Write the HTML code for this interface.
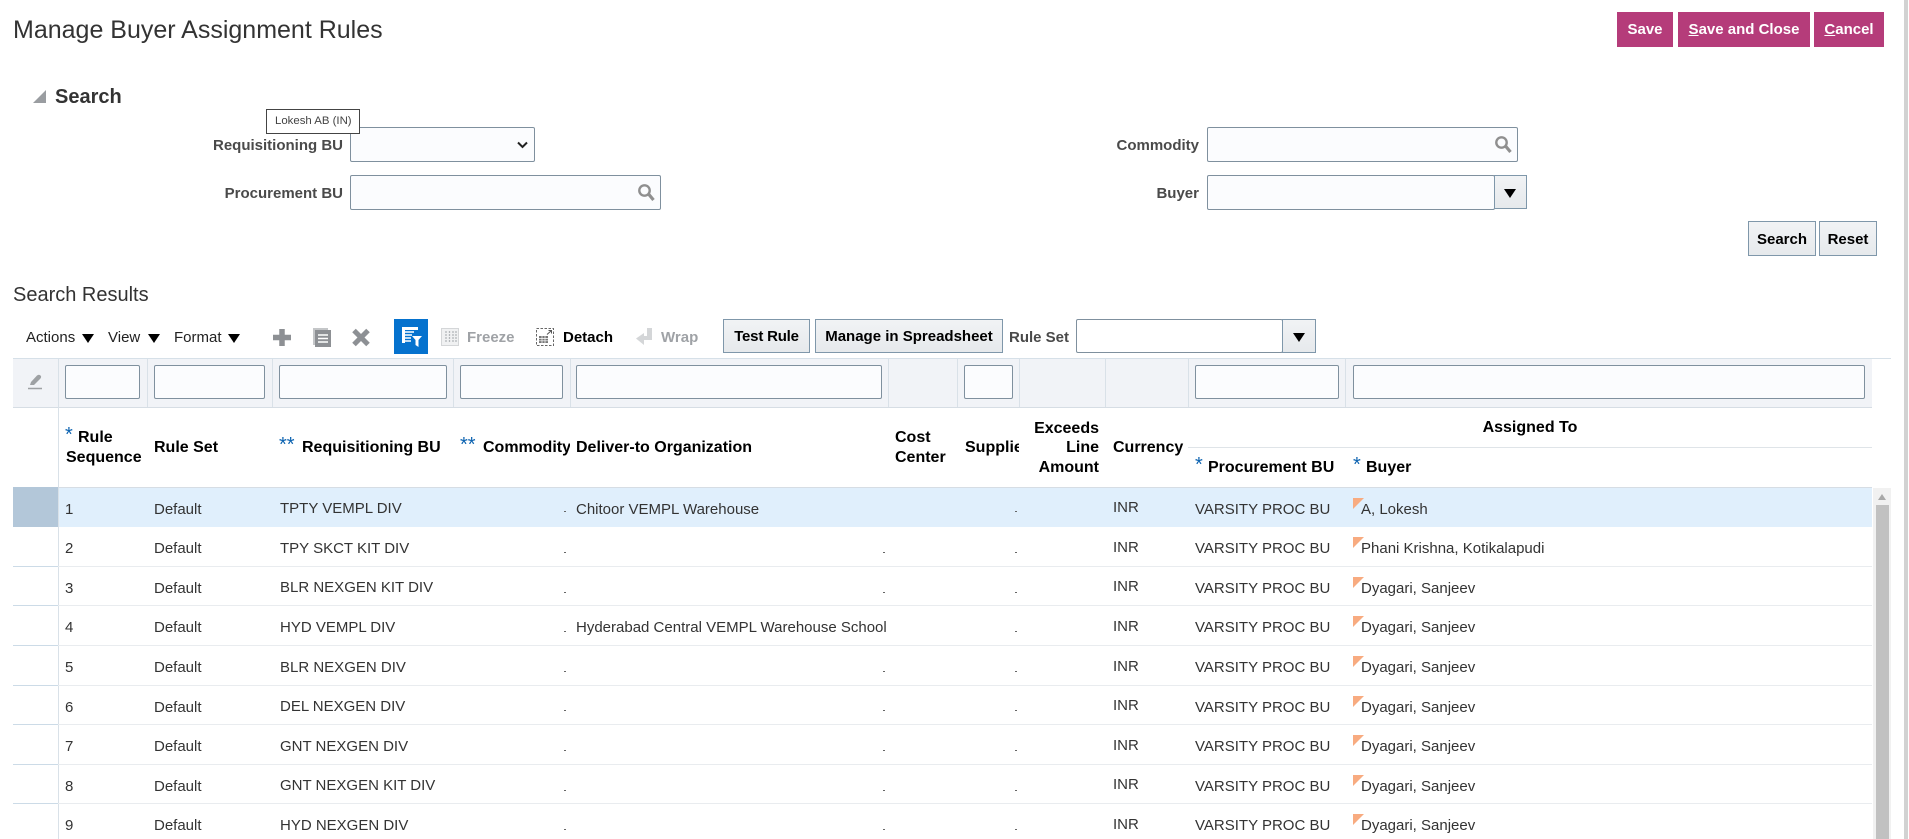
<!DOCTYPE html>
<html><head><meta charset="utf-8"><title>Manage Buyer Assignment Rules</title>
<style>
html,body{margin:0;padding:0;background:#fff;overflow:hidden}
body{position:relative;width:1909px;height:839px;font-family:"Liberation Sans",Arial,sans-serif;font-size:15px;color:#333}
.a,.t,.l,.h,.i,.b{position:absolute;box-sizing:border-box}
.t,.l,.h{white-space:nowrap;line-height:20px;height:20px;margin-top:1px}
.l{font-weight:bold;color:#4a4a4a;text-align:right}
.h{font-weight:bold;color:#000;font-size:16px}
.h u{color:#0b62b0;text-decoration:none;font-weight:normal;font-size:20px;position:relative;top:-3px}
.i{background:#fbfcfe;border:1px solid #7f909e;border-radius:2px}
.b{background:linear-gradient(#f1f3f5,#e6e9ec);border:1px solid #7f97aa;font-weight:bold;color:#000;text-align:center;line-height:36px;white-space:nowrap}
.p{position:absolute;box-sizing:border-box;background:#b53c7a;color:#fff;font-weight:bold;text-align:center;height:35px;top:12px;line-height:36px;font-size:15px;white-space:nowrap}
.p u{text-decoration:underline}
.v{position:absolute;width:1px;background:#d9e1e8}
.r{position:absolute;left:58px;width:1814px;height:1px;background:#e9ecef}
.s{position:absolute;left:13px;width:45px;height:1px;background:#ccdbe7}
.d{position:absolute;width:2px;height:1px;background:#666}
.o{position:absolute;width:0;height:0;left:1353px;border-top:11px solid #f8ab80;border-right:11px solid transparent}
.m{position:absolute;width:0;height:0;border-left:6px solid transparent;border-right:6px solid transparent;border-top:9px solid #000}
svg{position:absolute;overflow:visible}
</style></head><body>

<div class="t" style="left:13px;top:14px;height:30px;line-height:30px;font-size:25px">Manage Buyer Assignment Rules</div>
<div class="p" style="left:1617px;width:56px">Save</div>
<div class="p" style="left:1678px;width:132px"><u>S</u>ave and Close</div>
<div class="p" style="left:1814px;width:70px"><u>C</u>ancel</div>
<div class="a" style="left:1904px;top:0;width:4px;height:839px;background:#d2d2d2"></div>

<svg style="left:33px;top:90px" width="13" height="13"><path d="M13 0V13H0Z" fill="#9a9da1"/></svg>
<div class="t" style="left:55px;top:84px;height:24px;line-height:24px;font-size:20px;font-weight:bold;color:#333">Search</div>

<div class="l" style="right:1566px;top:135px">Requisitioning BU</div>
<div class="i" style="left:350px;top:127px;width:185px;height:35px"></div>
<svg style="left:517px;top:141px" width="11" height="8"><path d="M1 1.5L5.5 6L10 1.5" fill="none" stroke="#222" stroke-width="2"/></svg>
<div class="a" style="left:266px;top:109px;width:94px;height:25px;background:#fff;border:1px solid #444;font-size:11.4px;line-height:23px;padding-left:8px;white-space:nowrap;color:#444">Lokesh AB (IN)</div>

<div class="l" style="right:1566px;top:183px">Procurement BU</div>
<div class="i" style="left:350px;top:175px;width:311px;height:35px"></div>
<svg style="left:638px;top:184px" width="17" height="17"><circle cx="6.5" cy="6.5" r="5.2" fill="none" stroke="#8f8f8f" stroke-width="2.4"/><path d="M10.5 10L15.5 16" stroke="#8f8f8f" stroke-width="3.2"/></svg>

<div class="l" style="right:710px;top:135px">Commodity</div>
<div class="i" style="left:1207px;top:127px;width:311px;height:35px"></div>
<svg style="left:1495px;top:136px" width="17" height="17"><circle cx="6.5" cy="6.5" r="5.2" fill="none" stroke="#8f8f8f" stroke-width="2.4"/><path d="M10.5 10L15.5 16" stroke="#8f8f8f" stroke-width="3.2"/></svg>

<div class="l" style="right:710px;top:183px">Buyer</div>
<div class="i" style="left:1207px;top:175px;width:288px;height:35px"></div>
<div class="b" style="left:1494px;top:175px;width:33px;height:34px"></div>
<div class="m" style="left:1504px;top:189px"></div>

<div class="b" style="left:1748px;top:221px;width:68px;height:35px">Search</div>
<div class="b" style="left:1819px;top:221px;width:58px;height:35px">Reset</div>

<div class="t" style="left:13px;top:282px;height:24px;line-height:24px;font-size:20px;color:#333">Search Results</div>

<div class="t" style="left:26px;top:327px;color:#222">Actions</div><div class="m" style="left:82px;top:334px"></div>
<div class="t" style="left:108px;top:327px;color:#222">View</div><div class="m" style="left:148px;top:334px"></div>
<div class="t" style="left:174px;top:327px;color:#222">Format</div><div class="m" style="left:228px;top:334px"></div>

<svg style="left:273px;top:329px" width="18" height="17"><path d="M9 0V17M0 8.5H18" stroke="#8d9094" stroke-width="5.5"/></svg>
<svg style="left:313px;top:328px" width="18" height="19"><path d="M0 0H15V2H2V17H0Z" fill="#c4c6c8"/><rect x="2" y="2" width="16" height="17" fill="#8d9094"/><path d="M5 7H15M5 10.5H15M5 14H15" stroke="#fff" stroke-width="1.6"/></svg>
<svg style="left:352px;top:329px" width="18" height="17"><path d="M2 1.5L16 15.5M16 1.5L2 15.5" stroke="#8d9094" stroke-width="5"/></svg>

<div class="a" style="left:394px;top:319px;width:34px;height:35px;background:#0572ce"></div>
<svg style="left:402px;top:327px" width="22" height="21"><path d="M0 0H16V3H3V16H0Z" fill="#fff"/><path d="M3 5H12M3 8H10M3 11H9M3 14H9" stroke="#fff" stroke-width="1.5"/><path d="M10 9H20L16.5 13V20L13.5 18V13Z" fill="#fff"/></svg>

<svg style="left:441px;top:328px" width="18" height="18"><rect x=".5" y=".5" width="17" height="17" fill="#f0f1f2" stroke="#d4d6d8"/><path d="M5 3V15M8.5 3V15M12 3V15M15 3V15" stroke="#b4b7ba" stroke-width="1.3" stroke-dasharray="2 1"/></svg>
<div class="t" style="left:467px;top:327px;font-weight:bold;color:#9fa2a6">Freeze</div>

<svg style="left:536px;top:328px" width="18" height="18"><rect x=".5" y=".5" width="17" height="17" fill="none" stroke="#666" stroke-dasharray="2.5 1.5"/><rect x="3" y="8" width="9" height="7" fill="#777"/><path d="M3 10.5H12M3 12.8H12M6 8V15M9 8V15" stroke="#fff" stroke-width=".7"/><path d="M11 6.5L15.5 2.5M12.5 2.5H15.5V5.5" fill="none" stroke="#555"/></svg>
<div class="t" style="left:563px;top:327px;font-weight:bold;color:#000">Detach</div>

<svg style="left:636px;top:328px" width="17" height="18"><path d="M11 0H16V12H8V17L0 10.5L8 5V8H11Z" fill="#d4d6d8"/></svg>
<div class="t" style="left:661px;top:327px;font-weight:bold;color:#9fa2a6">Wrap</div>

<div class="b" style="left:723px;top:319px;width:87px;height:34px;line-height:34px;letter-spacing:-.2px">Test Rule</div>
<div class="b" style="left:815px;top:319px;width:188px;height:34px;line-height:34px">Manage in Spreadsheet</div>
<div class="t" style="left:1009px;top:327px;font-weight:bold;color:#4a4a4a">Rule Set</div>
<div class="i" style="left:1076px;top:319px;width:207px;height:34px;background:#fff"></div>
<div class="b" style="left:1282px;top:319px;width:34px;height:34px"></div>
<div class="m" style="left:1293px;top:333px"></div>

<div class="a" style="left:13px;top:358px;width:1878px;height:1px;background:#d6e0e8"></div>
<div class="a" style="left:13px;top:359px;width:1859px;height:48px;background:#f1f3f7"></div>
<div class="a" style="left:13px;top:407px;width:1859px;height:1px;background:#d6dde4"></div>

<div class="v" style="left:58px;top:359px;height:480px"></div>
<div class="v" style="left:147px;top:359px;height:48px"></div>
<div class="v" style="left:272px;top:359px;height:48px"></div>
<div class="v" style="left:453px;top:359px;height:48px"></div>
<div class="v" style="left:570px;top:359px;height:48px"></div>
<div class="v" style="left:888px;top:359px;height:48px"></div>
<div class="v" style="left:957px;top:359px;height:48px"></div>
<div class="v" style="left:1019px;top:359px;height:48px"></div>
<div class="v" style="left:1105px;top:359px;height:48px"></div>
<div class="v" style="left:1188px;top:359px;height:48px"></div>
<div class="v" style="left:1345px;top:359px;height:48px"></div>

<svg style="left:27px;top:374px" width="16" height="16"><path d="M3 11L4 8L10 1.5Q12 0 13.5 1.5Q15 3 13 5L7 11Z" fill="#9ea1a4"/><path d="M1 14.5H15" stroke="#9ea1a4" stroke-width="1.5"/></svg>

<div class="i" style="left:65px;top:365px;width:75px;height:34px"></div>
<div class="i" style="left:154px;top:365px;width:111px;height:34px"></div>
<div class="i" style="left:279px;top:365px;width:168px;height:34px"></div>
<div class="i" style="left:460px;top:365px;width:103px;height:34px"></div>
<div class="i" style="left:576px;top:365px;width:306px;height:34px"></div>
<div class="i" style="left:964px;top:365px;width:49px;height:34px"></div>
<div class="i" style="left:1195px;top:365px;width:144px;height:34px"></div>
<div class="i" style="left:1353px;top:365px;width:512px;height:34px"></div>

<div class="h" style="left:65px;top:427px"><u>*</u></div><div class="h" style="left:78px;top:427px">Rule</div>
<div class="h" style="left:66px;top:447px">Sequence</div>
<div class="h" style="left:154px;top:437px">Rule Set</div>
<div class="h" style="left:279px;top:437px"><u>**</u></div><div class="h" style="left:302px;top:437px">Requisitioning BU</div>
<div class="h" style="left:460px;top:437px"><u>**</u></div><div class="h" style="left:483px;top:437px;width:87px;overflow:hidden">Commodity</div>
<div class="h" style="left:576px;top:437px">Deliver-to Organization</div>
<div class="h" style="left:895px;top:427px">Cost</div>
<div class="h" style="left:895px;top:447px">Center</div>
<div class="h" style="left:965px;top:437px;width:54px;overflow:hidden">Supplier</div>
<div class="h" style="right:810px;top:418px">Exceeds</div>
<div class="h" style="right:810px;top:437px">Line</div>
<div class="h" style="right:810px;top:457px">Amount</div>
<div class="h" style="left:1113px;top:437px">Currency</div>
<div class="h" style="left:1480px;width:100px;text-align:center;top:417px">Assigned To</div>
<div class="a" style="left:1188px;top:447px;width:684px;height:1px;background:#dfe4e8"></div>
<div class="h" style="left:1195px;top:457px"><u>*</u></div><div class="h" style="left:1208px;top:457px">Procurement BU</div>
<div class="h" style="left:1353px;top:457px"><u>*</u></div><div class="h" style="left:1366px;top:457px">Buyer</div>

<div class="a" style="left:58px;top:487px;width:1814px;height:1px;background:#d6dde4"></div>
<div class="a" style="left:13px;top:487px;width:45px;height:40px;background:#b3c7d9"></div>
<div class="a" style="left:59px;top:488px;width:1813px;height:39px;background:#e0effc"></div>

<div class="r" style="top:566px"></div><div class="s" style="top:566px"></div>
<div class="r" style="top:605px"></div><div class="s" style="top:605px"></div>
<div class="r" style="top:645px"></div><div class="s" style="top:645px"></div>
<div class="r" style="top:685px"></div><div class="s" style="top:685px"></div>
<div class="r" style="top:724px"></div><div class="s" style="top:724px"></div>
<div class="r" style="top:764px"></div><div class="s" style="top:764px"></div>
<div class="r" style="top:803px"></div><div class="s" style="top:803px"></div>

<div class="a" style="left:1873px;top:488px;width:18px;height:351px;background:#f1f1f1"></div>
<div class="a" style="left:1876px;top:505px;width:13px;height:334px;background:#c1c1c1"></div>
<svg style="left:1878px;top:494px" width="8" height="6"><path d="M4 0L8 6H0Z" fill="#a8a8a8"/></svg>

<!-- row 1 -->
<div class="t" style="left:65px;top:499px">1</div><div class="t" style="left:154px;top:499px">Default</div><div class="t" style="left:280px;top:498px">TPTY VEMPL DIV</div><div class="d" style="left:564px;top:511px"></div><div class="t" style="left:576px;top:499px">Chitoor VEMPL Warehouse</div><div class="d" style="left:1015px;top:511px"></div><div class="t" style="left:1113px;top:497px">INR</div><div class="t" style="left:1195px;top:499px">VARSITY PROC BU</div><div class="o" style="top:498px"></div><div class="t" style="left:1361px;top:499px">A, Lokesh</div>
<!-- row 2 -->
<div class="t" style="left:65px;top:538px">2</div><div class="t" style="left:154px;top:538px">Default</div><div class="t" style="left:280px;top:538px">TPY SKCT KIT DIV</div><div class="d" style="left:564px;top:552px"></div><div class="d" style="left:883px;top:552px"></div><div class="d" style="left:1015px;top:552px"></div><div class="t" style="left:1113px;top:537px">INR</div><div class="t" style="left:1195px;top:538px">VARSITY PROC BU</div><div class="o" style="top:537px"></div><div class="t" style="left:1361px;top:538px">Phani Krishna, Kotikalapudi</div>
<!-- row 3 -->
<div class="t" style="left:65px;top:578px">3</div><div class="t" style="left:154px;top:578px">Default</div><div class="t" style="left:280px;top:577px">BLR NEXGEN KIT DIV</div><div class="d" style="left:564px;top:592px"></div><div class="d" style="left:883px;top:592px"></div><div class="d" style="left:1015px;top:592px"></div><div class="t" style="left:1113px;top:576px">INR</div><div class="t" style="left:1195px;top:578px">VARSITY PROC BU</div><div class="o" style="top:577px"></div><div class="t" style="left:1361px;top:578px">Dyagari, Sanjeev</div>
<!-- row 4 -->
<div class="t" style="left:65px;top:617px">4</div><div class="t" style="left:154px;top:617px">Default</div><div class="t" style="left:280px;top:617px">HYD VEMPL DIV</div><div class="d" style="left:564px;top:631px"></div><div class="t" style="left:576px;top:617px">Hyderabad Central VEMPL Warehouse School</div><div class="d" style="left:1015px;top:631px"></div><div class="t" style="left:1113px;top:616px">INR</div><div class="t" style="left:1195px;top:617px">VARSITY PROC BU</div><div class="o" style="top:616px"></div><div class="t" style="left:1361px;top:617px">Dyagari, Sanjeev</div>
<!-- row 5 -->
<div class="t" style="left:65px;top:657px">5</div><div class="t" style="left:154px;top:657px">Default</div><div class="t" style="left:280px;top:657px">BLR NEXGEN DIV</div><div class="d" style="left:564px;top:671px"></div><div class="d" style="left:883px;top:671px"></div><div class="d" style="left:1015px;top:671px"></div><div class="t" style="left:1113px;top:656px">INR</div><div class="t" style="left:1195px;top:657px">VARSITY PROC BU</div><div class="o" style="top:656px"></div><div class="t" style="left:1361px;top:657px">Dyagari, Sanjeev</div>
<!-- row 6 -->
<div class="t" style="left:65px;top:697px">6</div><div class="t" style="left:154px;top:697px">Default</div><div class="t" style="left:280px;top:696px">DEL NEXGEN DIV</div><div class="d" style="left:564px;top:710px"></div><div class="d" style="left:883px;top:710px"></div><div class="d" style="left:1015px;top:710px"></div><div class="t" style="left:1113px;top:695px">INR</div><div class="t" style="left:1195px;top:697px">VARSITY PROC BU</div><div class="o" style="top:696px"></div><div class="t" style="left:1361px;top:697px">Dyagari, Sanjeev</div>
<!-- row 7 -->
<div class="t" style="left:65px;top:736px">7</div><div class="t" style="left:154px;top:736px">Default</div><div class="t" style="left:280px;top:736px">GNT NEXGEN DIV</div><div class="d" style="left:564px;top:750px"></div><div class="d" style="left:883px;top:750px"></div><div class="d" style="left:1015px;top:750px"></div><div class="t" style="left:1113px;top:735px">INR</div><div class="t" style="left:1195px;top:736px">VARSITY PROC BU</div><div class="o" style="top:735px"></div><div class="t" style="left:1361px;top:736px">Dyagari, Sanjeev</div>
<!-- row 8 -->
<div class="t" style="left:65px;top:776px">8</div><div class="t" style="left:154px;top:776px">Default</div><div class="t" style="left:280px;top:775px">GNT NEXGEN KIT DIV</div><div class="d" style="left:564px;top:790px"></div><div class="d" style="left:883px;top:790px"></div><div class="d" style="left:1015px;top:790px"></div><div class="t" style="left:1113px;top:774px">INR</div><div class="t" style="left:1195px;top:776px">VARSITY PROC BU</div><div class="o" style="top:775px"></div><div class="t" style="left:1361px;top:776px">Dyagari, Sanjeev</div>
<!-- row 9 -->
<div class="t" style="left:65px;top:815px">9</div><div class="t" style="left:154px;top:815px">Default</div><div class="t" style="left:280px;top:815px">HYD NEXGEN DIV</div><div class="d" style="left:564px;top:829px"></div><div class="d" style="left:883px;top:829px"></div><div class="d" style="left:1015px;top:829px"></div><div class="t" style="left:1113px;top:814px">INR</div><div class="t" style="left:1195px;top:815px">VARSITY PROC BU</div><div class="o" style="top:814px"></div><div class="t" style="left:1361px;top:815px">Dyagari, Sanjeev</div>

</body></html>
